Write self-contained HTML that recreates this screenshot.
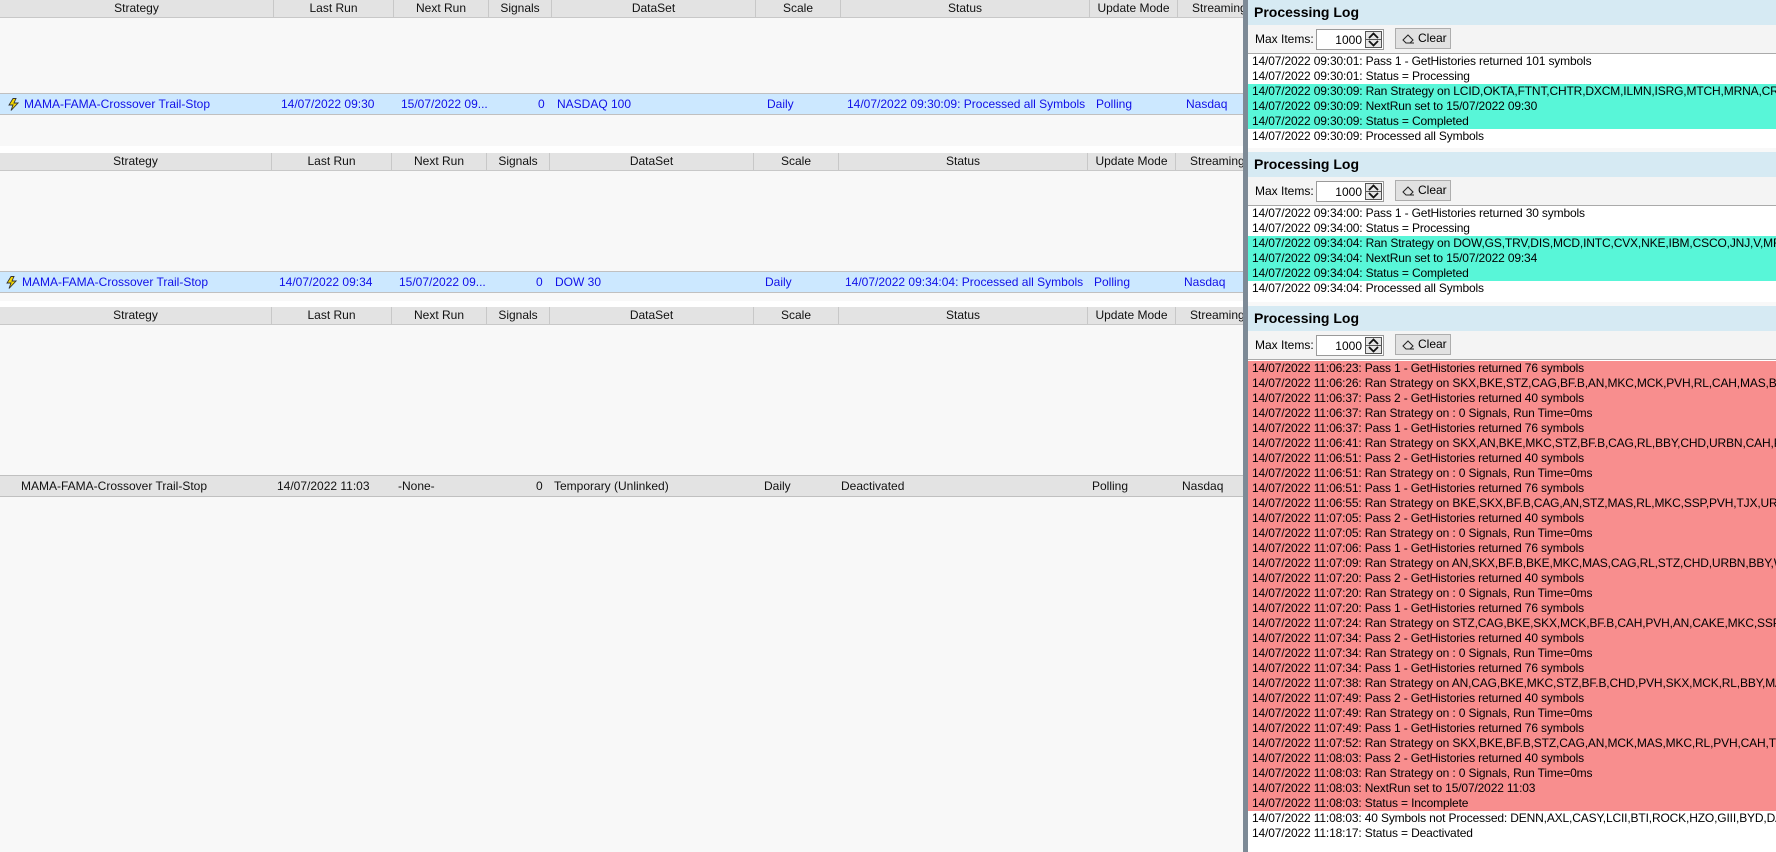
<!DOCTYPE html>
<html><head><meta charset="utf-8">
<style>
*{margin:0;padding:0;box-sizing:border-box}
body{width:1776px;height:852px;overflow:hidden;background:#f8f8f8;font-family:"Liberation Sans",sans-serif;font-size:12px;color:#000;position:relative}
.abs{position:absolute;white-space:nowrap}
.hdr{position:absolute;left:0;width:1243px;height:18px;background:#e3e3e3;border-bottom:1px solid #c8c8c8;overflow:hidden}
.hdr div{position:absolute;top:0;height:18px;line-height:17px;text-align:center;border-right:1px solid #c8c8c8;overflow:hidden;color:#111;white-space:nowrap}
.row{position:absolute;left:0;width:1243px;height:22px;border-top:1px solid #c0c0c0;border-bottom:1px solid #c0c0c0}
.row span{position:absolute;top:0;line-height:20px;white-space:nowrap}
.sel{background:#cce8ff;color:#1010e8}
.gray{background:#e3e3e3;color:#111}
.split{position:absolute;left:1243px;top:0;width:5px;height:852px;background:#7d8a96}
.panel{position:absolute;left:1248px;width:528px;background:#f4f4f4}
.title{position:absolute;left:0;width:528px;height:25px;background:#d6eaf3;font-weight:bold;font-size:14px;line-height:25px;padding-left:6px}
.tb{position:absolute;left:0;width:528px;height:28px}
.tb .lbl{position:absolute;left:7px;top:7px}
.spin{position:absolute;left:68px;top:4px;width:68px;height:21px;background:#fff;border:1px solid #9a9a9a;text-align:right;padding-right:21px;line-height:20px;font-size:12px}
.spin svg{position:absolute;right:1px;top:1px}
.btn{position:absolute;left:147px;top:3px;width:56px;height:21px;background:#e1e1e1;border:1px solid #adadad;line-height:19px;padding-left:22px}
.btn svg{position:absolute;left:6px;top:4px}
.list{position:absolute;left:0;width:528px;background:#fff;border-top:1px solid #aaa;overflow:hidden}
.list div{height:15px;line-height:15px;padding-left:4px;white-space:nowrap;letter-spacing:-0.15px}
.t{background:#58f6d8}.r{background:#f88e8e}
</style></head><body>

<!-- Section 1 -->
<div class="hdr" style="top:0">
<div style="left:0;width:274px">Strategy</div><div style="left:274px;width:120px">Last Run</div><div style="left:394px;width:95px">Next Run</div><div style="left:489px;width:63px">Signals</div><div style="left:552px;width:204px">DataSet</div><div style="left:756px;width:85px">Scale</div><div style="left:841px;width:249px">Status</div><div style="left:1090px;width:88px">Update Mode</div><div style="left:1178px;width:65px;text-align:left;padding-left:14px;border:none">Streaming</div>
</div>
<div class="row sel" style="top:93px">
<svg style="position:absolute;left:8px;top:4px" width="11" height="13" viewBox="0 0 11 13"><path d="M5 0.5 L1 7 L5 7 L3 12.5 L10 5 L6 5 L8 0.5 Z" fill="#f5d800" stroke="#333" stroke-width="0.9"/></svg>
<span style="left:24px">MAMA-FAMA-Crossover Trail-Stop</span><span style="left:281px">14/07/2022 09:30</span><span style="left:401px">15/07/2022 09...</span><span style="left:538px">0</span><span style="left:557px">NASDAQ 100</span><span style="left:767px">Daily</span><span style="left:847px">14/07/2022 09:30:09: Processed all Symbols</span><span style="left:1096px">Polling</span><span style="left:1186px">Nasdaq</span>
</div>
<div class="abs" style="left:0;top:146px;width:1243px;height:7px;background:#fff"></div>

<!-- Section 2 -->
<div class="hdr" style="top:153px">
<div style="left:0;width:272px">Strategy</div><div style="left:272px;width:120px">Last Run</div><div style="left:392px;width:95px">Next Run</div><div style="left:487px;width:63px">Signals</div><div style="left:550px;width:204px">DataSet</div><div style="left:754px;width:85px">Scale</div><div style="left:839px;width:249px">Status</div><div style="left:1088px;width:88px">Update Mode</div><div style="left:1176px;width:67px;text-align:left;padding-left:14px;border:none">Streaming</div>
</div>
<div class="row sel" style="top:271px">
<svg style="position:absolute;left:6px;top:4px" width="11" height="13" viewBox="0 0 11 13"><path d="M5 0.5 L1 7 L5 7 L3 12.5 L10 5 L6 5 L8 0.5 Z" fill="#f5d800" stroke="#333" stroke-width="0.9"/></svg>
<span style="left:22px">MAMA-FAMA-Crossover Trail-Stop</span><span style="left:279px">14/07/2022 09:34</span><span style="left:399px">15/07/2022 09...</span><span style="left:536px">0</span><span style="left:555px">DOW 30</span><span style="left:765px">Daily</span><span style="left:845px">14/07/2022 09:34:04: Processed all Symbols</span><span style="left:1094px">Polling</span><span style="left:1184px">Nasdaq</span>
</div>
<div class="abs" style="left:0;top:301px;width:1243px;height:6px;background:#fff"></div>

<!-- Section 3 -->
<div class="hdr" style="top:307px">
<div style="left:0;width:272px">Strategy</div><div style="left:272px;width:120px">Last Run</div><div style="left:392px;width:95px">Next Run</div><div style="left:487px;width:63px">Signals</div><div style="left:550px;width:204px">DataSet</div><div style="left:754px;width:85px">Scale</div><div style="left:839px;width:249px">Status</div><div style="left:1088px;width:88px">Update Mode</div><div style="left:1176px;width:67px;text-align:left;padding-left:14px;border:none">Streaming</div>
</div>
<div class="row gray" style="top:475px">
<span style="left:21px">MAMA-FAMA-Crossover Trail-Stop</span><span style="left:277px">14/07/2022 11:03</span><span style="left:398px">-None-</span><span style="left:536px">0</span><span style="left:554px">Temporary (Unlinked)</span><span style="left:764px">Daily</span><span style="left:841px">Deactivated</span><span style="left:1092px">Polling</span><span style="left:1182px">Nasdaq</span>
</div>

<div class="split"></div>

<!-- Log 1 -->
<div class="panel" style="top:0;height:148px">
<div class="title" style="top:0">Processing Log</div>
<div class="tb" style="top:25px"><span class="lbl">Max Items:</span><div class="spin">1000<svg width="17" height="17" viewBox="0 0 17 17"><rect x="0.5" y="0.5" width="16" height="16" fill="#e6e6e6" stroke="#555"/><line x1="1" y1="8.5" x2="16" y2="8.5" stroke="#555"/><path d="M4 7 L8.5 2.5 L13 7" fill="none" stroke="#111" stroke-width="1.8"/><path d="M4 10 L8.5 14.5 L13 10" fill="none" stroke="#111" stroke-width="1.8"/></svg></div><div class="btn"><svg width="13" height="12" viewBox="0 0 13 12"><path d="M1 7 L6 2 L11 7 L8 10 L4 10 Z M4 10 L12 10" fill="none" stroke="#222" stroke-width="1"/></svg>Clear</div></div>
<div class="list" style="top:53px;height:95px">
<div>14/07/2022 09:30:01: Pass 1 - GetHistories returned 101 symbols</div>
<div>14/07/2022 09:30:01: Status = Processing</div>
<div class="t">14/07/2022 09:30:09: Ran Strategy on LCID,OKTA,FTNT,CHTR,DXCM,ILMN,ISRG,MTCH,MRNA,CRWD,DDOG</div>
<div class="t">14/07/2022 09:30:09: NextRun set to 15/07/2022 09:30</div>
<div class="t">14/07/2022 09:30:09: Status = Completed</div>
<div>14/07/2022 09:30:09: Processed all Symbols</div>
</div></div>

<!-- Log 2 -->
<div class="panel" style="top:152px;height:150px">
<div class="title" style="top:0">Processing Log</div>
<div class="tb" style="top:25px"><span class="lbl">Max Items:</span><div class="spin">1000<svg width="17" height="17" viewBox="0 0 17 17"><rect x="0.5" y="0.5" width="16" height="16" fill="#e6e6e6" stroke="#555"/><line x1="1" y1="8.5" x2="16" y2="8.5" stroke="#555"/><path d="M4 7 L8.5 2.5 L13 7" fill="none" stroke="#111" stroke-width="1.8"/><path d="M4 10 L8.5 14.5 L13 10" fill="none" stroke="#111" stroke-width="1.8"/></svg></div><div class="btn"><svg width="13" height="12" viewBox="0 0 13 12"><path d="M1 7 L6 2 L11 7 L8 10 L4 10 Z M4 10 L12 10" fill="none" stroke="#222" stroke-width="1"/></svg>Clear</div></div>
<div class="list" style="top:53px;height:97px">
<div>14/07/2022 09:34:00: Pass 1 - GetHistories returned 30 symbols</div>
<div>14/07/2022 09:34:00: Status = Processing</div>
<div class="t">14/07/2022 09:34:04: Ran Strategy on DOW,GS,TRV,DIS,MCD,INTC,CVX,NKE,IBM,CSCO,JNJ,V,MRK,BA,AXP</div>
<div class="t">14/07/2022 09:34:04: NextRun set to 15/07/2022 09:34</div>
<div class="t">14/07/2022 09:34:04: Status = Completed</div>
<div>14/07/2022 09:34:04: Processed all Symbols</div>
</div></div>

<!-- Log 3 -->
<div class="panel" style="top:306px;height:546px">
<div class="title" style="top:0">Processing Log</div>
<div class="tb" style="top:25px"><span class="lbl">Max Items:</span><div class="spin">1000<svg width="17" height="17" viewBox="0 0 17 17"><rect x="0.5" y="0.5" width="16" height="16" fill="#e6e6e6" stroke="#555"/><line x1="1" y1="8.5" x2="16" y2="8.5" stroke="#555"/><path d="M4 7 L8.5 2.5 L13 7" fill="none" stroke="#111" stroke-width="1.8"/><path d="M4 10 L8.5 14.5 L13 10" fill="none" stroke="#111" stroke-width="1.8"/></svg></div><div class="btn"><svg width="13" height="12" viewBox="0 0 13 12"><path d="M1 7 L6 2 L11 7 L8 10 L4 10 Z M4 10 L12 10" fill="none" stroke="#222" stroke-width="1"/></svg>Clear</div></div>
<div class="list" style="top:53px;height:493px;padding-top:1px">
<div class="r">14/07/2022 11:06:23: Pass 1 - GetHistories returned 76 symbols</div>
<div class="r">14/07/2022 11:06:26: Ran Strategy on SKX,BKE,STZ,CAG,BF.B,AN,MKC,MCK,PVH,RL,CAH,MAS,BBY,SSP</div>
<div class="r">14/07/2022 11:06:37: Pass 2 - GetHistories returned 40 symbols</div>
<div class="r">14/07/2022 11:06:37: Ran Strategy on : 0 Signals, Run Time=0ms</div>
<div class="r">14/07/2022 11:06:37: Pass 1 - GetHistories returned 76 symbols</div>
<div class="r">14/07/2022 11:06:41: Ran Strategy on SKX,AN,BKE,MKC,STZ,BF.B,CAG,RL,BBY,CHD,URBN,CAH,PVH,CAKE</div>
<div class="r">14/07/2022 11:06:51: Pass 2 - GetHistories returned 40 symbols</div>
<div class="r">14/07/2022 11:06:51: Ran Strategy on : 0 Signals, Run Time=0ms</div>
<div class="r">14/07/2022 11:06:51: Pass 1 - GetHistories returned 76 symbols</div>
<div class="r">14/07/2022 11:06:55: Ran Strategy on BKE,SKX,BF.B,CAG,AN,STZ,MAS,RL,MKC,SSP,PVH,TJX,URBN,MCK</div>
<div class="r">14/07/2022 11:07:05: Pass 2 - GetHistories returned 40 symbols</div>
<div class="r">14/07/2022 11:07:05: Ran Strategy on : 0 Signals, Run Time=0ms</div>
<div class="r">14/07/2022 11:07:06: Pass 1 - GetHistories returned 76 symbols</div>
<div class="r">14/07/2022 11:07:09: Ran Strategy on AN,SKX,BF.B,BKE,MKC,MAS,CAG,RL,STZ,CHD,URBN,BBY,WWE,CAH</div>
<div class="r">14/07/2022 11:07:20: Pass 2 - GetHistories returned 40 symbols</div>
<div class="r">14/07/2022 11:07:20: Ran Strategy on : 0 Signals, Run Time=0ms</div>
<div class="r">14/07/2022 11:07:20: Pass 1 - GetHistories returned 76 symbols</div>
<div class="r">14/07/2022 11:07:24: Ran Strategy on STZ,CAG,BKE,SKX,MCK,BF.B,CAH,PVH,AN,CAKE,MKC,SSP,TJX,KR</div>
<div class="r">14/07/2022 11:07:34: Pass 2 - GetHistories returned 40 symbols</div>
<div class="r">14/07/2022 11:07:34: Ran Strategy on : 0 Signals, Run Time=0ms</div>
<div class="r">14/07/2022 11:07:34: Pass 1 - GetHistories returned 76 symbols</div>
<div class="r">14/07/2022 11:07:38: Ran Strategy on AN,CAG,BKE,MKC,STZ,BF.B,CHD,PVH,SKX,MCK,RL,BBY,MAS,CAH</div>
<div class="r">14/07/2022 11:07:49: Pass 2 - GetHistories returned 40 symbols</div>
<div class="r">14/07/2022 11:07:49: Ran Strategy on : 0 Signals, Run Time=0ms</div>
<div class="r">14/07/2022 11:07:49: Pass 1 - GetHistories returned 76 symbols</div>
<div class="r">14/07/2022 11:07:52: Ran Strategy on SKX,BKE,BF.B,STZ,CAG,AN,MCK,MAS,MKC,RL,PVH,CAH,TJX,SSP</div>
<div class="r">14/07/2022 11:08:03: Pass 2 - GetHistories returned 40 symbols</div>
<div class="r">14/07/2022 11:08:03: Ran Strategy on : 0 Signals, Run Time=0ms</div>
<div class="r">14/07/2022 11:08:03: NextRun set to 15/07/2022 11:03</div>
<div class="r">14/07/2022 11:08:03: Status = Incomplete</div>
<div>14/07/2022 11:08:03: 40 Symbols not Processed: DENN,AXL,CASY,LCII,BTI,ROCK,HZO,GIII,BYD,DAR,G</div>
<div>14/07/2022 11:18:17: Status = Deactivated</div>
</div></div>

</body></html>
